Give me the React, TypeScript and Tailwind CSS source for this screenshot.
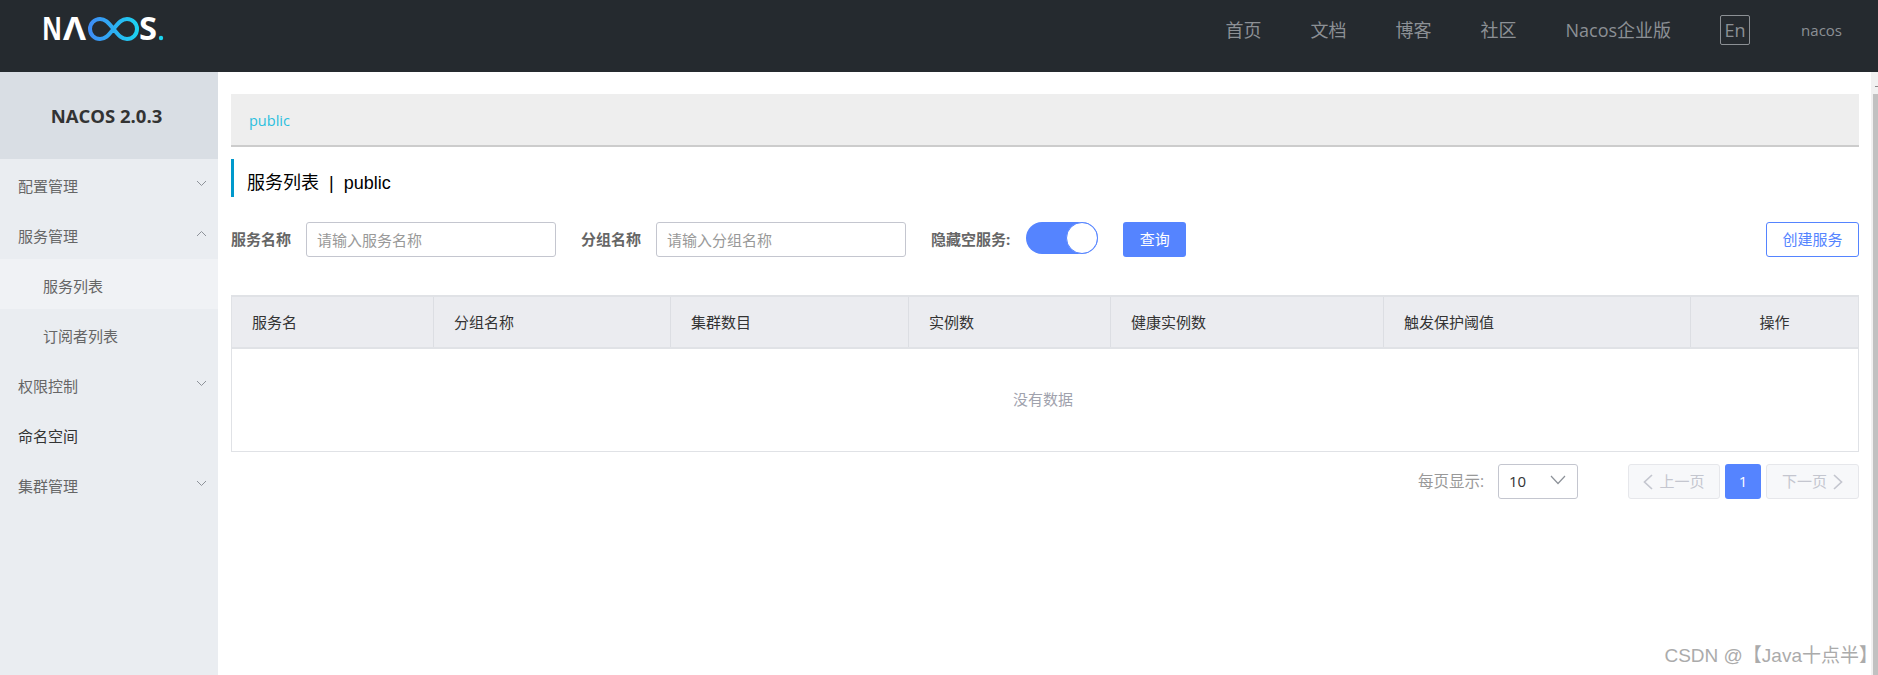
import React from 'react';

const navLinks = ['首页', '文档', '博客', '社区', 'Nacos企业版'];

const columns = [
  { title: '服务名', width: 'w-[202px]' },
  { title: '分组名称', width: 'w-[237px]' },
  { title: '集群数目', width: 'w-[238px]' },
  { title: '实例数', width: 'w-[202px]' },
  { title: '健康实例数', width: 'w-[273px]' },
  { title: '触发保护阈值', width: 'w-[307px]' },
];

const Chevron: React.FC<{ up?: boolean; className?: string }> = ({ up, className = '' }) => (
  <svg width="11" height="7" viewBox="0 0 11 7" fill="none" className={className}>
    <polyline
      points={up ? '1,6 5.5,1.5 10,6' : '1,1 5.5,5.5 10,1'}
      stroke="#8d9299"
      strokeWidth="1"
    />
  </svg>
);

const Logo = () => (
  <svg width="124" height="46" viewBox="0 0 124 46" className="mt-[4px] ml-[43px]">
    <defs>
      <linearGradient id="logoLoop" gradientUnits="userSpaceOnUse" x1="45" y1="0" x2="96" y2="0">
        <stop offset="0" stopColor="#3f8af6" />
        <stop offset="1" stopColor="#1bd4f0" />
      </linearGradient>
    </defs>
    <text x="-1" y="36" fill="#ffffff" fontFamily="Open Sans" fontWeight="700" fontSize="32" textLength="20" lengthAdjust="spacingAndGlyphs">N</text>
    <text x="20" y="36" fill="#ffffff" fontFamily="Open Sans" fontWeight="700" fontSize="32" textLength="23" lengthAdjust="spacingAndGlyphs">Λ</text>
    <path
      d="M70.5 25 C65 18 62 15 57 15 A10 10 0 0 0 57 35 C62 35 65 32 70.5 25 C76 18 79 15 84 15 A10 10 0 0 1 84 35 C79 35 76 32 70.5 25"
      fill="none"
      stroke="url(#logoLoop)"
      strokeWidth="4"
    />
    <text x="96" y="36" fill="#ffffff" fontFamily="Open Sans" fontWeight="700" fontSize="32" textLength="18" lengthAdjust="spacingAndGlyphs">S</text>
    <circle cx="118" cy="34" r="2.2" fill="#1bd4f0" />
  </svg>
);

const MenuItem: React.FC<{ label: string; open?: boolean; arrow?: boolean; dark?: boolean }> = ({
  label,
  open,
  arrow = true,
  dark,
}) => (
  <div className={`flex h-[50px] items-center justify-between pl-[18px] pr-[11px] pt-[4px] text-[15px] ${dark ? 'text-[#333333]' : 'text-[#666666]'}`}>
    <span>{label}</span>
    {arrow && <Chevron up={open} className="mb-[6px]" />}
  </div>
);

const Sidebar = () => (
  <aside className="h-full w-[218px] shrink-0 bg-[#eaedf1]">
    <div className="flex h-[87px] items-center justify-center bg-[#d9dee4] pr-[5px] text-[18.5px] font-bold text-[#333333]">
      NACOS 2.0.3
    </div>
    <MenuItem label="配置管理" />
    <MenuItem label="服务管理" open />
    <div className="flex h-[50px] items-center bg-[#f0f2f5] pl-[43px] pt-[4px] text-[15px] text-[#666666]">服务列表</div>
    <div className="flex h-[50px] items-center pl-[43px] pt-[4px] text-[15px] text-[#666666]">订阅者列表</div>
    <MenuItem label="权限控制" />
    <MenuItem label="命名空间" arrow={false} dark />
    <MenuItem label="集群管理" />
  </aside>
);

const FormLabel: React.FC<{ children: React.ReactNode; className?: string }> = ({ children, className = '' }) => (
  <span className={`text-[15px] font-bold text-[#666666] ${className}`}>{children}</span>
);

const SearchInput: React.FC<{ placeholder: string }> = ({ placeholder }) => (
  <input
    readOnly
    placeholder={placeholder}
    className="h-[35px] w-[250px] rounded-[3px] border border-[#c4c6cf] bg-white px-[10px] text-[15px] outline-none placeholder:text-[#999999]"
  />
);

const PageButton: React.FC<{ children: React.ReactNode; className?: string }> = ({ children, className = '' }) => (
  <div className={`flex h-[35px] items-center justify-center gap-[6px] rounded-[3px] border border-[#e6e7eb] bg-[#f7f8fa] text-[15px] text-[#c4c6cf] ${className}`}>
    {children}
  </div>
);

export default function App() {
  return (
    <div className="relative flex h-[675px] w-[1878px] flex-col overflow-hidden bg-white font-['Open_Sans','Noto_Sans_CJK_SC',sans-serif]">
      <header className="flex h-[72px] shrink-0 items-start justify-between bg-[#252a2f]">
        <Logo />
        <nav className="flex h-[60px] items-center pr-[36px] text-[#8c9095]">
          {navLinks.map((link) => (
            <a key={link} className="mr-[49px] text-[18px]">
              {link}
            </a>
          ))}
          <span className="flex h-[30px] w-[30px] items-center justify-center rounded-[2px] border border-[#8c9095] text-[18px]">
            En
          </span>
          <span className="ml-[51px] text-[15px]">nacos</span>
        </nav>
      </header>

      <div className="flex min-h-0 flex-1">
        <Sidebar />

        <main className="min-w-0 flex-1 pl-[13px] pr-[12px] pt-[22px]">
          <div className="flex h-[53px] items-center border-b-2 border-[#cccccc] bg-[#eeeeee] pl-[18px] pt-[3px] text-[14.5px] text-[#2bbfde]">
            public
          </div>

          <div className="mt-[12px] flex h-[38px] items-center border-l-[3px] border-[#0099cc] pl-[13px] pt-[10px] font-['Liberation_Sans','Noto_Sans_CJK_SC',sans-serif] text-[18px] text-[#000000]">
            服务列表<span className="mx-[10px]">|</span>public
          </div>

          <div className="mt-[25px] flex items-start">
            <div className="flex h-[35px] items-center">
              <FormLabel className="mr-[15px]">服务名称</FormLabel>
              <SearchInput placeholder="请输入服务名称" />
              <FormLabel className="ml-[25px] mr-[15px]">分组名称</FormLabel>
              <SearchInput placeholder="请输入分组名称" />
              <FormLabel className="ml-[25px] mr-[16px]">隐藏空服务:</FormLabel>
            </div>
            <div className="flex h-[32px] w-[72px] justify-end rounded-full bg-[#5584ff]">
              <div className="h-[32px] w-[32px] rounded-full border border-[#5584ff] bg-white" />
            </div>
            <button className="ml-[25px] h-[35px] w-[63px] rounded-[3px] bg-[#5584ff] text-[15px] text-white">查询</button>
            <button className="ml-auto h-[35px] w-[93px] rounded-[3px] border border-[#5584ff] bg-white text-[15px] text-[#5584ff]">
              创建服务
            </button>
          </div>

          <div className="mt-[38px] border-2 border-b border-x border-[#e0e2e6]">
            <div className="flex h-[52px] border-b-2 border-[#e0e2e6] bg-[#ebecf0] text-[15px] text-[#333333]">
              {columns.map((col) => (
                <div key={col.title} className={`flex items-center border-r border-[#dcdee3] pl-[20px] ${col.width}`}>
                  {col.title}
                </div>
              ))}
              <div className="flex flex-1 items-center justify-center">操作</div>
            </div>
            <div className="flex h-[102px] items-center justify-center pb-[2px] pr-[4px] text-[15px] text-[#a0a2ad]">没有数据</div>
          </div>

          <div className="mt-[12px] flex items-center justify-end">
            <span className="mr-[14px] text-[15.5px] text-[#999999]">每页显示:</span>
            <div className="mr-[50px] flex h-[35px] w-[80px] items-center justify-between rounded-[3px] border border-[#c4c6cf] pl-[10px] pr-[11px] text-[15px] text-[#333333]">
              10
              <svg width="16" height="10" viewBox="0 0 16 10" fill="none" className="mb-[4px]">
                <polyline points="1,1 8,8.5 15,1" stroke="#8d9299" strokeWidth="1.2" />
              </svg>
            </div>
            <PageButton className="w-[92px]">
              <svg width="10" height="16" viewBox="0 0 10 16" fill="none">
                <polyline points="9,1 1.5,8 9,15" stroke="#c4c6cf" strokeWidth="1.7" />
              </svg>
              上一页
            </PageButton>
            <div className="mx-[5px] flex h-[35px] w-[36px] items-center justify-center rounded-[3px] bg-[#5584ff] text-[15px] text-white">
              1
            </div>
            <PageButton className="w-[93px]">
              下一页
              <svg width="10" height="16" viewBox="0 0 10 16" fill="none">
                <polyline points="1,1 8.5,8 1,15" stroke="#c4c6cf" strokeWidth="1.7" />
              </svg>
            </PageButton>
          </div>
        </main>

        <div className="flex w-[7px] shrink-0 flex-col bg-[#f1f1f1]">
          <div className="mt-[14px] h-[1px] w-[3px] self-end bg-[#888888]" />
          <div className="mt-[7px] ml-[2px] flex-1 bg-[#c1c1c1]" />
        </div>
      </div>

      <span className="absolute bottom-[5px] right-[0px] font-['Liberation_Sans','Noto_Sans_CJK_SC',sans-serif] text-[19px] text-[#ababab]">
        CSDN @【Java十点半】
      </span>
    </div>
  );
}
